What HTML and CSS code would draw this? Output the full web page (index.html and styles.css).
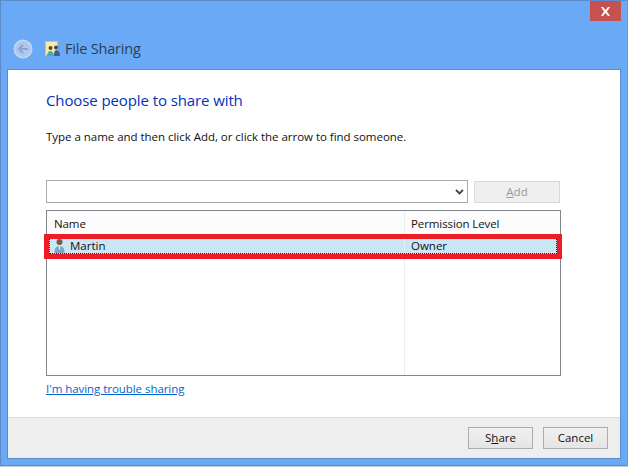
FILE: index.html
```html
<!DOCTYPE html>
<html lang="en">
<head>
<meta charset="utf-8">
<title>File Sharing</title>
<link rel="stylesheet" href="styles.css">
</head>
<body>
<div class="window">
  <button class="close" aria-label="Close">
    <svg width="11" height="9" viewBox="0 0 11 9"><path d="M1 0h2l2.500 3 2.500-3h2L7 4.500 10 9H8L5.500 6 3 9H1l3-4.500z" fill="#fff"/></svg>
  </button>
  <header class="titlebar">
    <svg class="back" width="20" height="20" viewBox="0 0 20 20">
      <circle cx="10" cy="10" r="8.700" fill="#adc8ee" stroke="#c6d6f0" stroke-width="1.500"/>
      <path d="M15 10H6M10 6l-4 4 4 4" fill="none" stroke="#8ba6d2" stroke-width="2.200"/>
    </svg>
    <svg class="appicon" width="16" height="16" viewBox="0 0 16 16">
      <rect x="0.500" y="0.500" width="12" height="14" fill="#fbeaa6" stroke="#e8bf62"/>
      <circle cx="5.500" cy="7" r="2" fill="#5a4630"/>
      <circle cx="11" cy="6.500" r="2" fill="#3c4660"/>
      <path d="M9 15c0-4 .5-6 2.500-6s3.500 2 3.500 6z" fill="#3f6190"/>
      <path d="M2 15c0-3 1.500-5 3.500-5s3.500 2 3.500 5z" fill="#45b0a0"/>
    </svg>
    <h1 class="apptitle">File Sharing</h1>
  </header>
  <main class="panel">
    <section class="content">
      <h2 class="heading">Choose people to share with</h2>
      <p class="hint">Type a name and then click Add, or click the arrow to find someone.</p>
      <div class="addrow">
        <div class="combo">
          <svg width="9" height="6" viewBox="0 0 9 6"><path d="M1 1l3.500 3.500L8 1" fill="none" stroke="#444" stroke-width="1.800"/></svg>
        </div>
        <button class="btn btn-add" disabled><u>A</u>dd</button>
      </div>
      <div class="list">
        <div class="list-head">
          <div class="col-name">Name</div>
          <div class="col-level">Permission Level</div>
        </div>
        <div class="list-row">
          <div class="col-name">
            <svg class="user" width="13" height="16" viewBox="0 0 13 16">
              <circle cx="6.500" cy="4" r="3" fill="#7a5a48"/>
              <path d="M1.500 15c0-5 1.500-7 5-7s5 2 5 7z" fill="#7aa5cc"/>
              <path d="M5.500 8h2l-.5 4h-1z" fill="#eadfcc"/>
            </svg>
            Martin
          </div>
          <div class="col-level">Owner</div>
        </div>
        <div class="list-body">
          <div class="col-name"></div>
          <div class="col-level"></div>
        </div>
        <div class="highlight"></div>
      </div>
      <a class="trouble" href="#">I'm having trouble sharing</a>
    </section>
    <footer class="footer">
      <button class="btn">S<u>h</u>are</button>
      <button class="btn">Cancel</button>
    </footer>
  </main>
</div>
</body>
</html>
```
FILE: styles.css
```css
* { box-sizing: border-box; }
html, body { margin: 0; padding: 0; }
body {
  width: 628px;
  height: 467px;
  overflow: hidden;
  background: #c9ccd0;
  font-family: "Open Sans", "Noto Sans", sans-serif;
  font-size: 12px;
  color: #111;
}
.window {
  position: relative;
  width: 628px;
  height: 466px;
  background: #69a9f5;
  border: 1px solid #5b8ccb;
  border-right-color: #6a9ad6;
  padding: 0 6px 6px 6px;
  display: flex;
  flex-direction: column;
}
.close {
  position: absolute;
  top: 0;
  right: 6px;
  width: 31px;
  height: 20px;
  padding: 0;
  border: 0;
  background: #c75050;
  display: flex;
  align-items: center;
  justify-content: center;
}
.titlebar {
  height: 68px;
  flex: none;
  display: flex;
  align-items: flex-start;
  padding: 38px 0 0 6px;
}
.back { flex: none; margin-right: 12px; }
.appicon { flex: none; margin: 2px 4px 0 0; }
.apptitle {
  margin: -1px 0 0;
  font-size: 14.500px;
  font-weight: 400;
  line-height: 22px;
  color: #2c3e55;
  letter-spacing: -0.200px;
}
.panel {
  flex: 1;
  display: flex;
  flex-direction: column;
  background: #fff;
  border: 1px solid #5b8ccb;
}
.content {
  flex: 1;
  padding: 19px 58px 0 38px;
}
.heading {
  margin: 0;
  font-size: 15px;
  font-weight: 400;
  line-height: 22px;
  color: #0033bc;
  letter-spacing: -0.100px;
}
.hint {
  margin: 17px 0 0;
  line-height: 18px;
  font-size: 11.500px;
  letter-spacing: -0.030px;
}
.addrow {
  margin-top: 34px;
  display: flex;
  gap: 6px;
  height: 23px;
}
.combo {
  width: 422px;
  height: 23px;
  background: #fff;
  border: 1px solid #a9a9a9;
  display: flex;
  align-items: center;
  justify-content: flex-end;
  padding-right: 3px;
}
.btn {
  width: 65px;
  height: 22px;
  padding: 0 0 1px;
  font: inherit;
  font-size: 11.500px;
  color: #111;
  background: linear-gradient(#f0f0f0, #e5e5e5);
  border: 1px solid #acacac;
}
.btn-add {
  width: 86px;
  margin-top: 1px;
  background: #efefef;
  border-color: #d9d9d9;
  color: #9a9a9a;
}
.list {
  position: relative;
  margin-top: 7px;
  width: 515px;
  height: 166px;
  border: 1px solid #82878f;
  display: flex;
  flex-direction: column;
}
.list-head, .list-row, .list-body { display: flex; }
.list-head {
  height: 24px;
  align-items: center;
  background: #fcfcfc;
  font-size: 11.500px;
  letter-spacing: -0.100px;
}
.list-row {
  height: 22px;
  align-items: center;
  background: #cbe6f5;
  font-size: 11.500px;
  padding-bottom: 1px;
}
.list-body { flex: 1; }
.col-name {
  width: 357px;
  height: 100%;
  display: flex;
  align-items: center;
  padding-left: 7px;
}
.col-level {
  flex: 1;
  height: 100%;
  display: flex;
  align-items: center;
  padding-left: 6px;
  border-left: 1px solid #e6eef6;
}
.user { margin: 0 4px 0 -1px; flex: none; }
.highlight {
  position: absolute;
  left: -3px;
  right: -2px;
  top: 23px;
  height: 25px;
  border: 5px solid #ee1c25;
  pointer-events: none;
}
.highlight::after {
  content: "";
  position: absolute;
  inset: 0;
  border: 1px dotted #222;
  border-top: 0;
}
.trouble {
  display: block;
  margin-top: 4px;
  width: max-content;
  line-height: 18px;
  font-size: 11.500px;
  letter-spacing: -0.050px;
  color: #0066cc;
}
.footer {
  height: 41px;
  flex: none;
  background: #eeeeee;
  border-top: 1px solid #dedede;
  display: flex;
  justify-content: flex-end;
  align-items: flex-start;
  gap: 10px;
  padding: 9px 12px 0 0;
}
```
